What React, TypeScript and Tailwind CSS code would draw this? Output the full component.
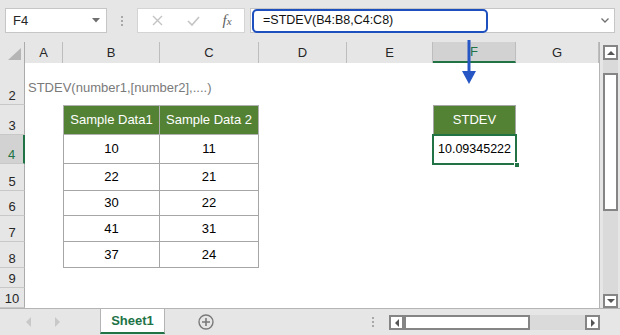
import React from "react";

const data: [number, number][] = [
  [10, 11],
  [22, 21],
  [30, 22],
  [41, 31],
  [37, 24],
];

const colLetters = ["A", "B", "C", "D", "E", "F", "G"];

const RowHead: React.FC<{ n: number; active?: boolean }> = ({ n, active }) => (
  <div
    className={`flex items-end justify-center border-b border-[#c8c8c8] text-[13px] leading-[15px] pb-[1px] ${
      active
        ? "bg-[#d2d2d2] text-[#217346] border-r-2 border-r-[#217346]"
        : "bg-[#e6e6e6] text-[#262626] border-r border-r-[#ababab]"
    }`}
  >
    {n}
  </div>
);

const Empty: React.FC = () => <div />;

const FormulaBar: React.FC = () => (
  <div className="h-[42px] flex items-start pt-[8px] pl-[5px]">
    {/* Name box */}
    <div className="w-[102px] h-[25px] bg-white border border-[#c6c6c6] flex items-center justify-between pl-[7px] pr-[6px]">
      <span className="text-[13px] text-[#262626]">F4</span>
      <svg width="8" height="5" viewBox="0 0 8 5">
        <polygon points="0,0 8,0 4,4.5" fill="#6f6f6f" />
      </svg>
    </div>
    {/* dots */}
    <div className="w-[30px] h-[25px] flex flex-col items-center justify-center gap-[2px]">
      <span className="w-[2px] h-[2px] bg-[#a8a8a8]" />
      <span className="w-[2px] h-[2px] bg-[#a8a8a8]" />
      <span className="w-[2px] h-[2px] bg-[#a8a8a8]" />
    </div>
    {/* fx box */}
    <div className="w-[108px] h-[25px] bg-white border border-[#d4d4d4] flex items-center">
      <div className="w-[38px] flex justify-center">
        <svg width="11" height="11" viewBox="0 0 11 11">
          <path d="M1 1 L10 10 M10 1 L1 10" stroke="#c3c3c3" strokeWidth="1.4" />
        </svg>
      </div>
      <div className="w-[34px] flex justify-center">
        <svg width="13" height="10" viewBox="0 0 13 10">
          <path d="M1 5 L5 9 L12 1" stroke="#c3c3c3" strokeWidth="1.6" fill="none" />
        </svg>
      </div>
      <div className="w-[34px] flex justify-center">
        <span className="font-['Liberation_Serif',serif] italic text-[15px] text-[#606060] leading-none">
          f<span className="text-[11px]">x</span>
        </span>
      </div>
    </div>
    {/* formula input */}
    <div className="ml-[5px] w-[365px] h-[25px] bg-white border border-[#c6c6c6] flex items-center relative">
      <div className="ml-[1px] w-[236px] h-[24px] border-2 border-[#1d4fbf] rounded-[5px] flex items-center pl-[9px]">
        <span className="text-[12.5px] text-[#111]">=STDEV(B4:B8,C4:C8)</span>
      </div>
      <div className="flex-1" />
      <svg width="8" height="5" viewBox="0 0 8 5" className="mr-[5px]">
        <path d="M0.5 0.5 L4 4 L7.5 0.5" stroke="#707070" strokeWidth="1.3" fill="none" />
      </svg>
    </div>
  </div>
);

const ScrollBtn: React.FC<{ dir: "up" | "down" | "left" | "right"; className: string }> = ({ dir, className }) => {
  const pts: Record<string, string> = {
    up: "1,5 9,5 5,1",
    down: "1,1 9,1 5,5",
    left: "5,1 5,9 1,5",
    right: "1,1 1,9 5,5",
  };
  const vert = dir === "up" || dir === "down";
  return (
    <div className={`bg-white border-2 border-[#858585] flex items-center justify-center ${className}`}>
      <svg width={vert ? 10 : 6} height={vert ? 6 : 10} viewBox={vert ? "0 0 10 6" : "0 0 6 10"}>
        <polygon points={pts[dir]} fill="#555" />
      </svg>
    </div>
  );
};

const Sheet: React.FC = () => {
  const tableCell = "flex items-center justify-center border-r border-b border-[#a6a6a6] text-[13px] text-black";
  return (
    <div className="w-[600px] border-r border-[#b4b4b4] grid grid-cols-[25px_38px_97px_99px_88px_86px_83px_83px] grid-rows-[21px_42px_30px_29px_27px_25px_26px_26px_20px_20px] bg-white">
      {/* corner */}
      <div className="bg-[#e6e6e6] border-r border-[#ababab] flex items-end justify-end pr-[3px] pb-[3px]">
        <svg width="13" height="12" viewBox="0 0 13 12">
          <polygon points="13,0 13,12 0,12" fill="#b5b5b5" />
        </svg>
      </div>
      {colLetters.map((c) =>
        c === "F" ? (
          <div
            key={c}
            className="bg-[#d2d2d2] border-r border-[#bdbdbd] border-b-2 border-b-[#217346] flex items-center justify-center text-[13px] text-[#217346]"
          >
            {c}
          </div>
        ) : (
          <div
            key={c}
            className="bg-[#e6e6e6] border-r border-[#bdbdbd] flex items-center justify-center text-[13px] text-[#262626]"
          >
            {c}
          </div>
        )
      )}

      {/* row 2 */}
      <RowHead n={2} />
      <div className="col-span-7 pt-[15px] pl-[3px] text-[13px] text-[#7a7a7a] whitespace-nowrap">
        STDEV(number1,[number2],....)
      </div>

      {/* row 3 */}
      <RowHead n={3} />
      <Empty />
      <div className="flex items-center justify-center bg-[#548235] border border-[#b0b0b0] text-[13px] text-white">
        Sample Data1
      </div>
      <div className="flex items-center justify-center bg-[#548235] border-y border-r border-[#b0b0b0] text-[13px] text-white">
        Sample Data 2
      </div>
      <Empty />
      <Empty />
      <div className="flex items-center justify-center bg-[#548235] border border-[#a6a6a6] text-[13px] text-white">
        STDEV
      </div>
      <Empty />

      {/* rows 4-8 */}
      {data.map(([b, c], i) => (
        <React.Fragment key={i}>
          <RowHead n={i + 4} active={i === 0} />
          <Empty />
          <div className={`${tableCell} border-l`}>{b}</div>
          <div className={tableCell}>{c}</div>
          <Empty />
          <Empty />
          {i === 0 ? (
            <div className="relative flex items-center justify-center text-[12.5px] text-black">
              10.09345222
              <div className="absolute -left-px -top-px -right-px -bottom-px border-2 border-[#217346]" />
              <div className="absolute -right-[4px] -bottom-[4px] w-[6px] h-[6px] bg-[#217346] border border-white" />
            </div>
          ) : (
            <Empty />
          )}
          <Empty />
        </React.Fragment>
      ))}

      {/* rows 9-10 */}
      <RowHead n={9} />
      <div className="col-span-7" />
      <RowHead n={10} />
      <div className="col-span-7" />
    </div>
  );
};

const VScroll: React.FC = () => (
  <div className="w-[20px] flex flex-col items-start pl-[3px] pt-[3px]">
    <ScrollBtn dir="up" className="w-[15px] h-[15px]" />
    <div className="w-[15px] flex-1 bg-[#dadada] flex flex-col justify-between pt-[13px]">
      <div className="w-[15px] h-[138px] bg-white border-2 border-[#858585]" />
      <ScrollBtn dir="down" className="w-[15px] h-[14px]" />
    </div>
  </div>
);

const BottomBar: React.FC = () => (
  <div className="h-[27px] border-t border-[#b4b4b4] flex items-start">
    <div className="w-[100px] h-[26px] flex items-center">
      <svg width="6" height="10" viewBox="0 0 6 10" className="ml-[26px]">
        <polygon points="5,0 5,10 0,5" fill="#c8c8c8" />
      </svg>
      <svg width="6" height="10" viewBox="0 0 6 10" className="ml-[22px]">
        <polygon points="1,0 1,10 6,5" fill="#c8c8c8" />
      </svg>
    </div>
    <div className="w-[65px] h-[25px] bg-white border-x border-[#b4b4b4] border-b-2 border-b-[#217346] flex items-center justify-center">
      <span className="font-bold text-[13px] text-[#217346]">Sheet1</span>
    </div>
    <div className="w-[82px] h-[26px] flex items-center justify-center">
      <svg width="16" height="16" viewBox="0 0 16 16">
        <circle cx="8" cy="8" r="7" stroke="#7a7a7a" strokeWidth="1.4" fill="none" />
        <path d="M8 4 V12 M4 8 H12" stroke="#7a7a7a" strokeWidth="1.6" />
      </svg>
    </div>
    <div className="flex-1 h-[26px] flex items-center justify-end">
      <div className="flex flex-col gap-[2px] mr-[15px]">
        <span className="w-[2px] h-[2px] bg-[#a8a8a8]" />
        <span className="w-[2px] h-[2px] bg-[#a8a8a8]" />
        <span className="w-[2px] h-[2px] bg-[#a8a8a8]" />
      </div>
    </div>
    <div className="w-[231px] h-[26px] flex items-start pt-[6px]">
      <ScrollBtn dir="left" className="w-[15px] h-[15px]" />
      <div className="w-[126px] h-[15px] bg-white border-2 border-[#858585]" />
      <div className="w-[55px] h-[15px] bg-[#dadada]" />
      <ScrollBtn dir="right" className="w-[15px] h-[15px]" />
    </div>
  </div>
);

export default function App() {
  return (
    <div className="relative w-[620px] h-[335px] overflow-hidden bg-[#e6e6e6] flex flex-col font-['Liberation_Sans',Arial,sans-serif]">
      <FormulaBar />
      <div className="flex h-[266px]">
        <Sheet />
        <VScroll />
      </div>
      <BottomBar />
      {/* blue arrow pointing from formula to F column */}
      <svg className="absolute left-[462px] top-[38px]" width="14" height="47" viewBox="0 0 14 47">
        <path d="M7 2 V36" stroke="#2656c4" strokeWidth="3" />
        <polygon points="0,33 14,33 7,46" fill="#2656c4" />
      </svg>
    </div>
  );
}
